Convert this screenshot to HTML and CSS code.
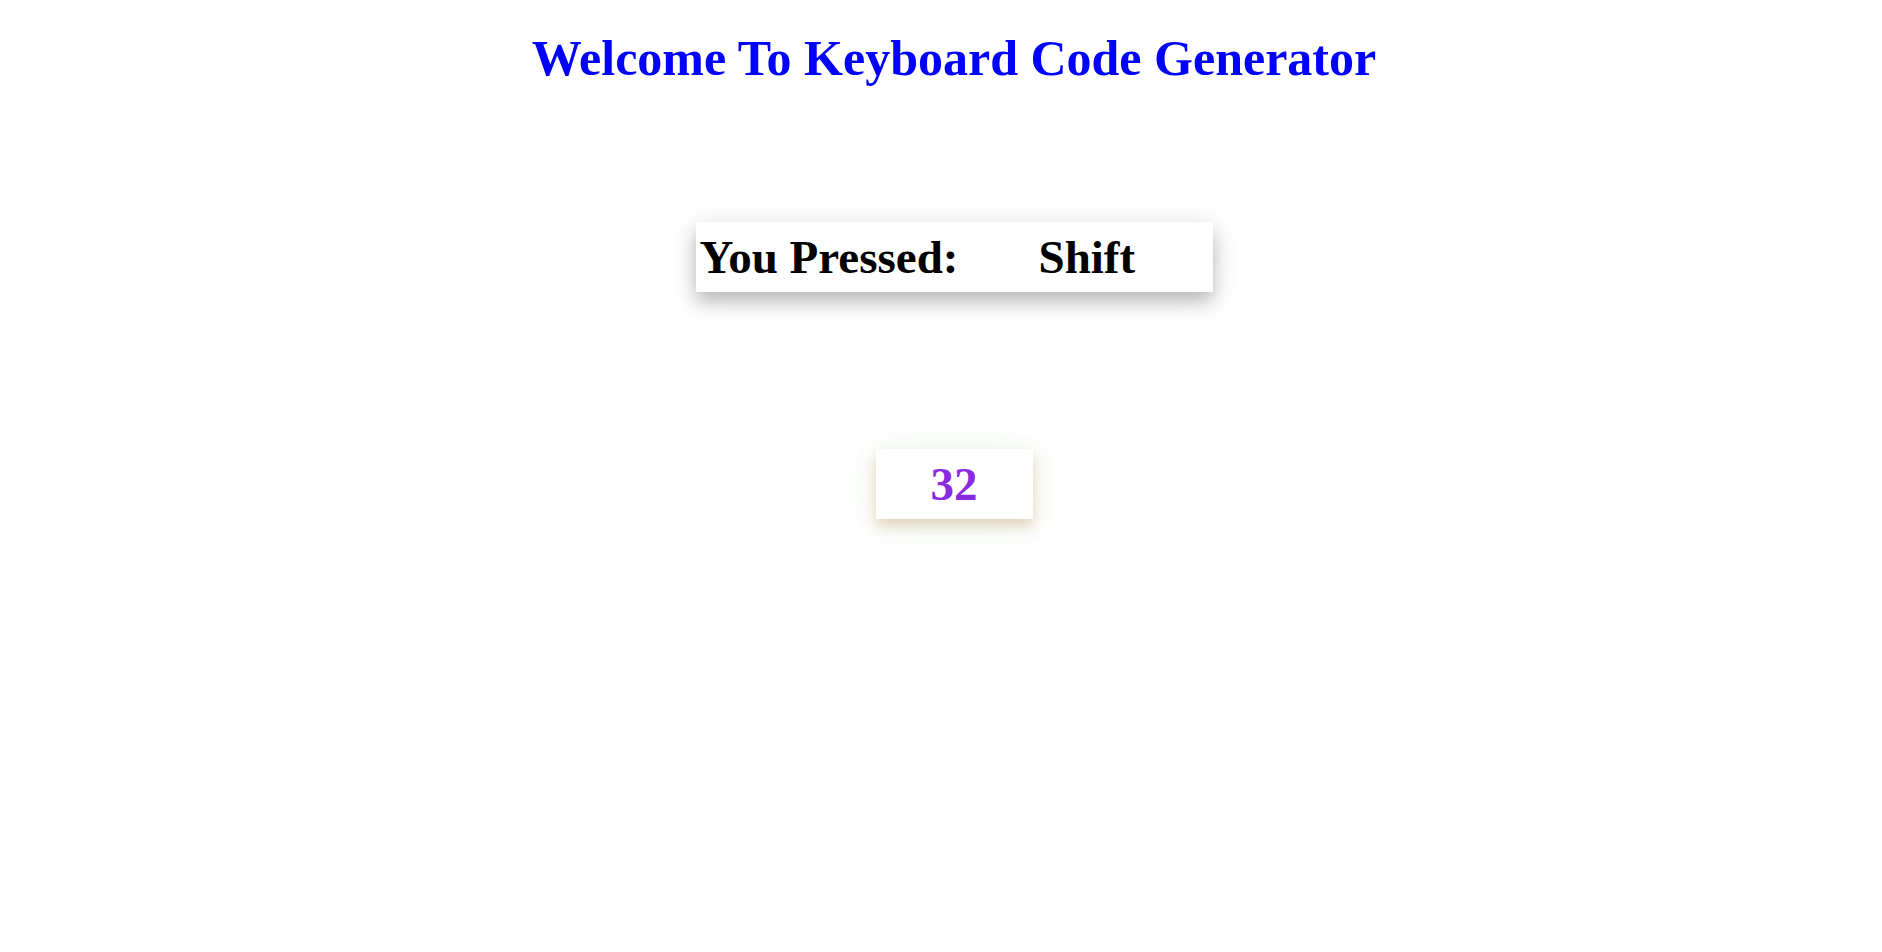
FILE: index.html
```html
<!DOCTYPE html>
<html lang="en">
<head>
<meta charset="utf-8">
<title>Keyboard Code Generator</title>
<link rel="stylesheet" href="styles.css">
</head>
<body>
<main class="page">
  <h1 class="title">Welcome To Keyboard Code Generator</h1>
  <div class="pressed">
    <span class="pressed-label">You Pressed:</span>
    <span class="pressed-key">Shift</span>
  </div>
  <div class="code">32</div>
</main>
</body>
</html>
```

FILE: styles.css
```css
html, body {
  margin: 0;
  padding: 0;
  background: #ffffff;
}

.page {
  display: flex;
  flex-direction: column;
  align-items: center;
  box-sizing: border-box;
  min-height: 100vh;
  padding-left: 26px;
  font-family: "Liberation Serif", "Times New Roman", serif;
  font-weight: bold;
}

.title {
  margin: 32px 0 0 0;
  font-size: 50px;
  line-height: 53px;
  color: #0000ff;
}

.pressed {
  margin-top: 137px;
  width: 517px;
  height: 70px;
  box-sizing: border-box;
  padding: 9px 0 0 4px;
  display: flex;
  font-size: 47px;
  line-height: 53px;
  color: #000000;
  background: #ffffff;
  box-shadow: 0 10px 18px rgba(0, 0, 0, 0.26), 0 0 34px rgba(0, 0, 0, 0.06);
}

.pressed-label {
  width: 339px;
  flex: none;
}

.code {
  margin-top: 157px;
  width: 157px;
  height: 70px;
  box-sizing: border-box;
  padding-top: 9px;
  text-align: center;
  font-size: 47px;
  line-height: 53px;
  color: #8a2be2;
  background: #ffffff;
  box-shadow: 0 7px 12px rgba(210, 180, 140, 0.55), 0 4px 40px rgba(200, 235, 200, 0.35);
}
```
